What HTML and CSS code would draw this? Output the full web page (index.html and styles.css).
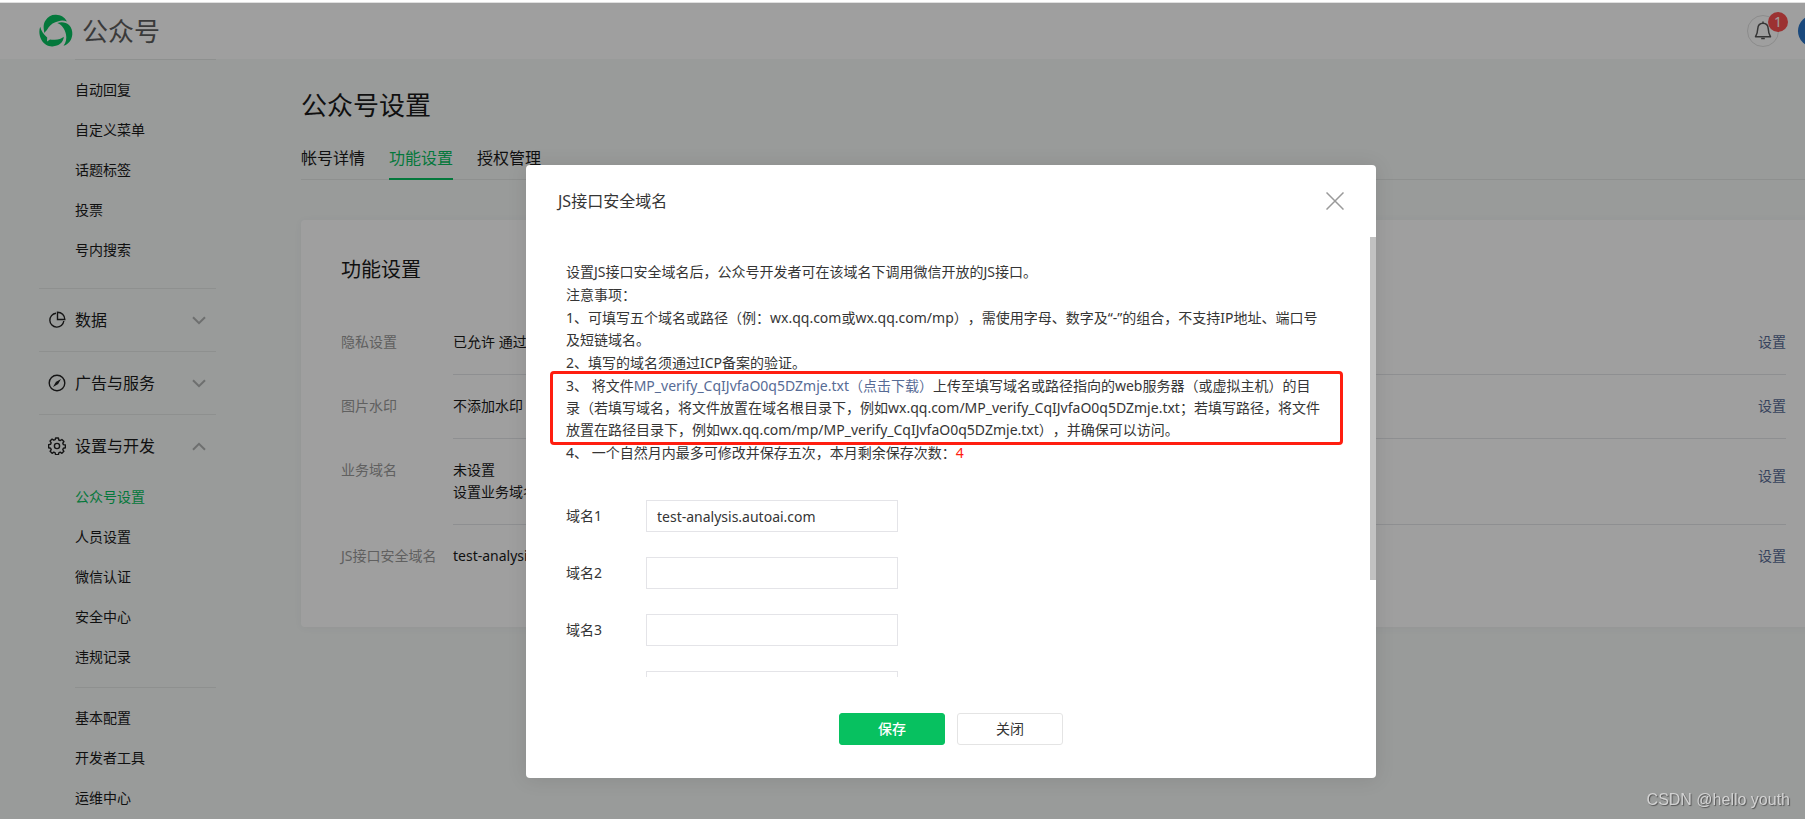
FILE: index.html
```html
<!DOCTYPE html>
<html lang="zh-CN">
<head>
  <meta charset="UTF-8" />
  <meta name="viewport" content="width=device-width, initial-scale=1.0" />
  <title>公众号</title>
  <link rel="stylesheet" href="styles.css">
</head>
<body>
  <div class="app">
    <header class="header">
      <a href="#" class="logo">
        <svg class="logo-icon" viewBox="0 0 34 34" fill="#07c160">
          <path d="M5.400 19C4.500 14 4 10 6.500 6.500 9 2.500 12.500.500 17 .700 22 .900 25.500 3 28 7.400 25 6.300 22 6.200 19.500 7.200 15 8 11.500 10.500 9.500 13.500 8 16 6.500 17.500 5.400 19Z" />
          <path d="M18.300 9C22.500 7.600 27 8.200 30 11 32.500 13.500 33.600 17 33.300 20.500 32.800 26 29.500 30.500 24.500 31.800 27 28.500 27.800 24.500 27 20.500 26 15 23 11 18.300 9Z" />
          <path d="M1.200 12.800C-.300 17 .200 22 2.500 26 5 30.300 9 32.600 13.500 32.400 20 32 24.500 28.500 24.800 22.800 22.500 24.800 19.500 25.800 16 25.800 14 25.900 12.300 25.700 11 25.500L8 27.400 8.200 23.500C4.500 20.500 2.200 17 1.200 12.800Z" />
        </svg>
        <span class="logo-text">公众号</span>
      </a>
      <div class="header-right">
        <button class="bell" aria-label="通知">
          <svg width="18" height="20" viewBox="0 0 18 20" fill="none" stroke="#555" stroke-width="1.500">
            <path d="M1.500 15.800C3.500 13 3.600 11 3.800 7.500 4 4.200 6 2.200 9 2.200s5 2 5.200 5.300c.200 3.500.300 5.500 2.300 8.300ZM9 0.500v1.700" stroke-linejoin="round" />
            <path d="M7.200 17.500h3.600" />
          </svg>
          <span class="badge">1</span>
        </button>
        <a href="#" class="avatar" aria-label="帐号"></a>
      </div>
    </header>

    <div class="layout">
      <nav class="sidebar">
        <div class="sub-menu">
          <a href="#">自动回复</a>
          <a href="#">自定义菜单</a>
          <a href="#">话题标签</a>
          <a href="#">投票</a>
          <a href="#">号内搜索</a>
        </div>

        <button class="menu-title menu-title-first">
          <svg class="menu-icon" viewBox="0 0 18 18" fill="none" stroke="#222" stroke-width="1.400">
            <path d="M8 2.200A7 7 0 1 0 15.800 10M9.500 1.200V8.500H16.800A7.300 7.300 0 0 0 9.500 1.200Z" />
          </svg>
          <span>数据</span>
          <svg class="arrow" viewBox="0 0 14 9"><path d="M1 1.200 7 7.200 13 1.200" /></svg>
        </button>
        <button class="menu-title">
          <svg class="menu-icon" viewBox="0 0 18 18" fill="none" stroke="#222" stroke-width="1.400">
            <circle cx="9" cy="9" r="7.800" />
            <path d="M13 5 10 10.200 7.800 8ZM5 13 8 7.800 10.200 10Z" fill="#222" stroke="none" />
          </svg>
          <span>广告与服务</span>
          <svg class="arrow" viewBox="0 0 14 9"><path d="M1 1.200 7 7.200 13 1.200" /></svg>
        </button>
        <button class="menu-title">
          <svg class="menu-icon" viewBox="0 0 18 18" fill="none" stroke="#222" stroke-width="1.400">
            <circle cx="9" cy="9" r="2.600" />
            <path stroke-linejoin="round" d="M7.600 1h2.800l.4 2 1.400.600 1.700-1.100 2 2-1.100 1.700.600 1.400 2 .4v2.800l-2 .4-.600 1.400 1.100 1.700-2 2-1.700-1.100-1.400.600-.4 2H7.600l-.4-2-1.400-.600-1.700 1.100-2-2 1.100-1.700-.600-1.400-2-.4V7.600l2-.4.600-1.400L2.100 4.100l2-2 1.700 1.100 1.400-.600Z" />
          </svg>
          <span>设置与开发</span>
          <svg class="arrow" viewBox="0 0 14 9"><path d="M1 7.800 7 1.800 13 7.800" /></svg>
        </button>

        <div class="menu-list">
          <a href="#" class="active">公众号设置</a>
          <a href="#">人员设置</a>
          <a href="#">微信认证</a>
          <a href="#">安全中心</a>
          <a href="#">违规记录</a>
        </div>
        <div class="sub-menu second">
          <a href="#">基本配置</a>
          <a href="#">开发者工具</a>
          <a href="#">运维中心</a>
        </div>
      </nav>

      <main class="main-content">
        <h1>公众号设置</h1>
        <div class="tabs">
          <a href="#">帐号详情</a>
          <a href="#" class="active">功能设置</a>
          <a href="#">授权管理</a>
        </div>

        <section class="card">
          <h2>功能设置</h2>
          <div class="setting">
            <span class="setting-name">隐私设置</span>
            <div class="setting-body">
              <p>已允许 通过</p>
              <a href="#">设置</a>
            </div>
          </div>
          <div class="setting">
            <span class="setting-name">图片水印</span>
            <div class="setting-body">
              <p>不添加水印</p>
              <a href="#">设置</a>
            </div>
          </div>
          <div class="setting">
            <span class="setting-name">业务域名</span>
            <div class="setting-body two-lines">
              <p>未设置<br>设置业务域名</p>
              <a href="#">设置</a>
            </div>
          </div>
          <div class="setting">
            <span class="setting-name">JS接口安全域名</span>
            <div class="setting-body">
              <p>test-analysis.autoai.com</p>
              <a href="#">设置</a>
            </div>
          </div>
        </section>
      </main>
    </div>

    <div class="mask">
      <div class="dialog" role="dialog" aria-labelledby="dialog-title">
        <div class="dialog-header">
          <h3 id="dialog-title">JS接口安全域名</h3>
          <button class="close" aria-label="关闭">
            <svg width="18" height="18" viewBox="0 0 18 18" stroke="#9a9a9a" stroke-width="1.500"><path d="M.500 .500 17.500 17.500M17.500 .500 .500 17.500" /></svg>
          </button>
        </div>

        <div class="dialog-body">
          <div class="tips">
            <p>设置JS接口安全域名后，公众号开发者可在该域名下调用微信开放的JS接口。</p>
            <p>注意事项：</p>
            <p>1、可填写五个域名或路径（例：wx.qq.com或wx.qq.com/mp），需使用字母、数字及“-”的组合，不支持IP地址、端口号<br>及短链域名。</p>
            <p>2、填写的域名须通过ICP备案的验证。</p>
            <p class="highlight">3、 将文件<a href="#">MP_verify_CqIJvfaO0q5DZmje.txt（点击下载）</a>上传至填写域名或路径指向的web服务器（或虚拟主机）的目<br>录（若填写域名，将文件放置在域名根目录下，例如wx.qq.com/MP_verify_CqIJvfaO0q5DZmje.txt；若填写路径，将文件<br>放置在路径目录下，例如wx.qq.com/mp/MP_verify_CqIJvfaO0q5DZmje.txt），并确保可以访问。</p>
            <p>4、 一个自然月内最多可修改并保存五次，本月剩余保存次数：<span class="count">4</span></p>
          </div>
          <form class="domains">
            <div class="field">
              <label for="domain1">域名1</label>
              <input type="text" id="domain1" value="test-analysis.autoai.com">
            </div>
            <div class="field">
              <label for="domain2">域名2</label>
              <input type="text" id="domain2">
            </div>
            <div class="field">
              <label for="domain3">域名3</label>
              <input type="text" id="domain3">
            </div>
            <div class="field">
              <label for="domain4">域名4</label>
              <input type="text" id="domain4">
            </div>
          </form>
          <div class="scroll-thumb"></div>
        </div>

        <div class="dialog-footer">
          <button class="btn btn-primary">保存</button>
          <button class="btn">关闭</button>
        </div>
      </div>
    </div>
  </div>
  <div class="watermark">CSDN @hello youth</div>
</body>
</html>
```
FILE: styles.css
```css
* {
  margin: 0;
  padding: 0;
  box-sizing: border-box;
}

body {
  height: 100vh;
  overflow: hidden;
  border-top: 2px solid #fff;
  background-color: #f5f8f7;
  color: #1a1a1a;
  font-family: "Noto Sans", "Noto Sans CJK SC", sans-serif;
  font-size: 14px;
  line-height: 22px;
  text-spacing-trim: space-all;
}

a {
  color: #576b95;
  text-decoration: none;
}

button,
input {
  font: inherit;
  color: inherit;
}

button {
  background: none;
  border: none;
  cursor: pointer;
}

/* the page is wider than the window, the right edge is cut off */
.app {
  position: relative;
  height: 100%;
  margin-right: -97px;
  border-top: 1px solid #e0e0e0;
}

.header {
  display: flex;
  justify-content: space-between;
  align-items: center;
  height: 56px;
  padding: 0 72px 0 39px;
  background-color: #fff;
}

.logo {
  display: flex;
  align-items: center;
  gap: 9px;
  color: #5e5e5e;
}

.logo-icon {
  width: 34px;
  height: 34px;
}

.logo-text {
  font-size: 26px;
  line-height: 36px;
}

.header-right {
  display: flex;
  align-items: center;
  gap: 19px;
}

.bell {
  position: relative;
  display: flex;
  align-items: center;
  justify-content: center;
  width: 32px;
  height: 32px;
  border: 1px solid #e0e0e0;
  border-radius: 50%;
}

.badge {
  position: absolute;
  top: -4px;
  right: -10px;
  width: 20px;
  height: 20px;
  border-radius: 50%;
  background-color: #fa5151;
  color: #fff;
  font-size: 14px;
  line-height: 20px;
  text-align: center;
}

.avatar {
  width: 32px;
  height: 32px;
  border-radius: 50%;
  background-color: #2a76c8;
}

.layout {
  display: flex;
}

.sidebar {
  width: 216px;
  padding-left: 39px;
}

.sidebar a {
  display: block;
  color: #1a1a1a;
  line-height: 40px;
}

.sidebar a.active {
  color: #07c160;
}

.sub-menu {
  margin-left: 36px;
  padding: 10px 0 18px;
  border-top: 1px solid #e4e7e6;
}

.sub-menu.second {
  margin-top: 10px;
}

.menu-list {
  padding-left: 36px;
}

.menu-title {
  display: flex;
  align-items: center;
  gap: 9px;
  width: 100%;
  height: 63px;
  padding: 0 10px 0 9px;
  border-top: 1px solid #e4e7e6;
  font-size: 16px;
}

.menu-icon {
  width: 18px;
  height: 18px;
}

.arrow {
  width: 14px;
  height: 9px;
  margin-left: auto;
  fill: none;
  stroke: #b0b3b2;
  stroke-width: 2;
}

.main-content {
  flex: 1;
  padding: 28px 76px 0 85px;
}

h1 {
  font-size: 26px;
  font-weight: 400;
  line-height: 36px;
}

.tabs {
  display: flex;
  gap: 24px;
  margin: 20px 0 40px;
  border-bottom: 1px solid #e4e7e6;
  font-size: 16px;
}

.tabs a {
  margin-bottom: -1px;
  padding: 3px 0 8px;
  color: #1a1a1a;
  line-height: 24px;
}

.tabs .active {
  border-bottom: 2px solid #07c160;
  color: #07c160;
}

.card {
  padding: 36px 40px 39px;
  border-radius: 4px;
  background-color: #fff;
  box-shadow: 0 1px 8px rgba(0, 0, 0, 0.04);
}

h2 {
  margin-bottom: 27px;
  font-size: 20px;
  font-weight: 400;
  line-height: 28px;
}

.setting {
  display: flex;
}

.setting-name {
  width: 112px;
  padding-top: 20px;
  color: #9a9a9a;
}

.setting-body {
  display: flex;
  flex: 1;
  justify-content: space-between;
  align-items: center;
  padding: 20px 0 21px;
  border-bottom: 1px solid #e4e6e9;
}

.setting:last-child .setting-body {
  border-bottom: none;
}

.two-lines a {
  padding-bottom: 10px;
}

.mask {
  position: absolute;
  inset: 0;
  display: flex;
  align-items: flex-start;
  justify-content: center;
  padding-top: 162px;
  background-color: rgba(0, 0, 0, 0.376);
}

.dialog {
  width: 850px;
  border-radius: 4px;
  background-color: #fff;
  box-shadow: 0 1px 20px rgba(0, 0, 0, 0.1);
  color: #353535;
}

.dialog-header {
  display: flex;
  justify-content: space-between;
  align-items: center;
  height: 72px;
  padding: 0 32px;
}

h3 {
  font-size: 16px;
  font-weight: 400;
}

.close {
  display: flex;
}

.dialog-body {
  position: relative;
  height: 440px;
  padding: 24px 40px 0;
  overflow: hidden;
}

.tips {
  display: grid;
  gap: 1px;
  white-space: nowrap;
}

.highlight {
  position: relative;
}

.highlight::after {
  content: "";
  position: absolute;
  inset: -4px -7px -4px -16px;
  border: 3px solid #ff1e10;
  border-radius: 4px;
  pointer-events: none;
}

.count {
  color: #ff1e10;
}

.domains {
  display: grid;
  gap: 25px;
  margin-top: 36px;
}

.field {
  display: flex;
  align-items: center;
}

.field label {
  width: 80px;
}

.field input {
  width: 252px;
  height: 32px;
  padding: 0 10px;
  border: 1px solid #e4e4e8;
}

.scroll-thumb {
  position: absolute;
  top: 0;
  right: 0;
  width: 6px;
  height: 78%;
  background-color: #c1c1c1;
}

.dialog-footer {
  display: flex;
  justify-content: center;
  gap: 12px;
  padding: 36px 0 33px;
}

.btn {
  width: 106px;
  height: 32px;
  border: 1px solid #e4e4e4;
  border-radius: 3px;
}

.btn-primary {
  border-color: #07c160;
  background-color: #07c160;
  color: #fff;
  font-weight: 500;
}

.watermark {
  position: fixed;
  right: 15px;
  bottom: 8px;
  color: #d2d2d2;
  font-family: "Liberation Sans", sans-serif;
  font-size: 16px;
  text-shadow: 1px 1px 1px #555;
}
```
